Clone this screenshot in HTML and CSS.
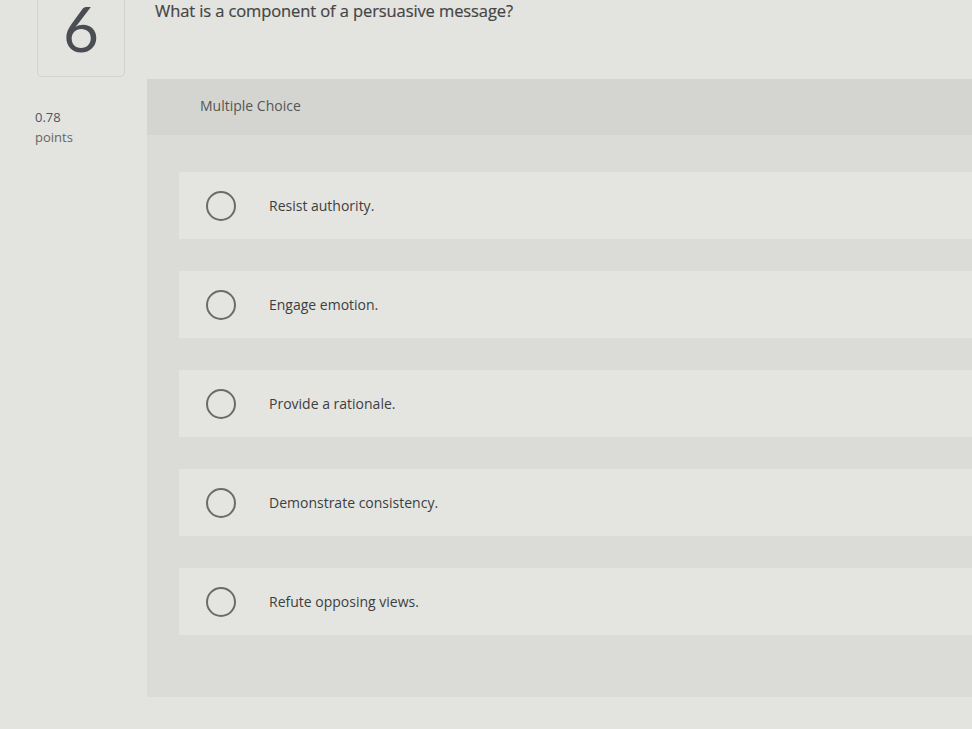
FILE: index.html
```html
<!DOCTYPE html>
<html>
<head>
<meta charset="utf-8">
<link rel="stylesheet" href="styles.css">
</head>
<body>
<div class="page">
  <aside class="side">
    <div class="qnum">6</div>
    <div class="pts">
      <div class="pts-val">0.78</div>
      <div class="pts-lbl">points</div>
    </div>
  </aside>
  <main class="main">
    <div class="question">What is a component of a persuasive message?</div>
    <section class="panel">
      <div class="panel-head">Multiple Choice</div>
      <div class="options">
        <div class="opt"><span class="radio"></span><span class="opt-text">Resist authority.</span></div>
        <div class="opt"><span class="radio"></span><span class="opt-text">Engage emotion.</span></div>
        <div class="opt"><span class="radio"></span><span class="opt-text">Provide a rationale.</span></div>
        <div class="opt"><span class="radio"></span><span class="opt-text">Demonstrate consistency.</span></div>
        <div class="opt"><span class="radio"></span><span class="opt-text">Refute opposing views.</span></div>
      </div>
    </section>
  </main>
</div>
</body>
</html>
```
FILE: styles.css
```css
html, body {
  margin: 0;
  padding: 0;
  background: #e3e4e0;
  font-family: "Open Sans", "Liberation Sans", sans-serif;
  color: #444;
}
.page {
  display: flex;
  width: 972px;
  height: 729px;
  overflow: hidden;
}
.side {
  width: 147px;
  flex: none;
}
.qnum {
  margin-left: 37px;
  width: 86px;
  height: 73px;
  padding-top: 3px;
  border: 1px solid #d2d3cf;
  border-top: none;
  border-radius: 0 0 5px 5px;
  display: flex;
  justify-content: center;
  align-items: flex-start;
  font-family: "Lato", "Open Sans", sans-serif;
  font-size: 62px;
  line-height: 50px;
  color: #4a4d52;
}
.pts {
  margin-left: 35px;
  margin-top: 30px;
  font-size: 13px;
  line-height: 20px;
}
.pts-val { color: #4e5566; }
.pts-lbl { color: #666; }
.main {
  flex: 1;
  min-width: 0;
}
.question {
  padding-left: 8px;
  font-size: 16.5px;
  line-height: 22px;
  color: #454545;
  font-weight: 500;
  letter-spacing: -0.1px;
  -webkit-text-stroke: 0.2px #454545;
}
.panel {
  margin-top: 57px;
  background: #dbdcd8;
  padding-bottom: 62px;
}
.panel-head {
  height: 52px;
  padding-bottom: 4px;
  background: #d4d5d1;
  padding-left: 53px;
  display: flex;
  align-items: center;
  font-size: 14px;
  color: #555;
}
.options {
  padding-top: 37px;
  padding-left: 32px;
  display: flex;
  flex-direction: column;
  gap: 32px;
}
.opt {
  height: 67px;
  background: #e4e5e1;
  display: flex;
  align-items: center;
  padding-left: 27px;
}
.radio {
  width: 26px;
  height: 26px;
  border: 2px solid #6a6c6c;
  border-radius: 50%;
  flex: none;
}
.opt-text {
  margin-left: 33px;
  font-size: 14px;
  color: #3e3e3e;
  font-weight: 500;
}
```
